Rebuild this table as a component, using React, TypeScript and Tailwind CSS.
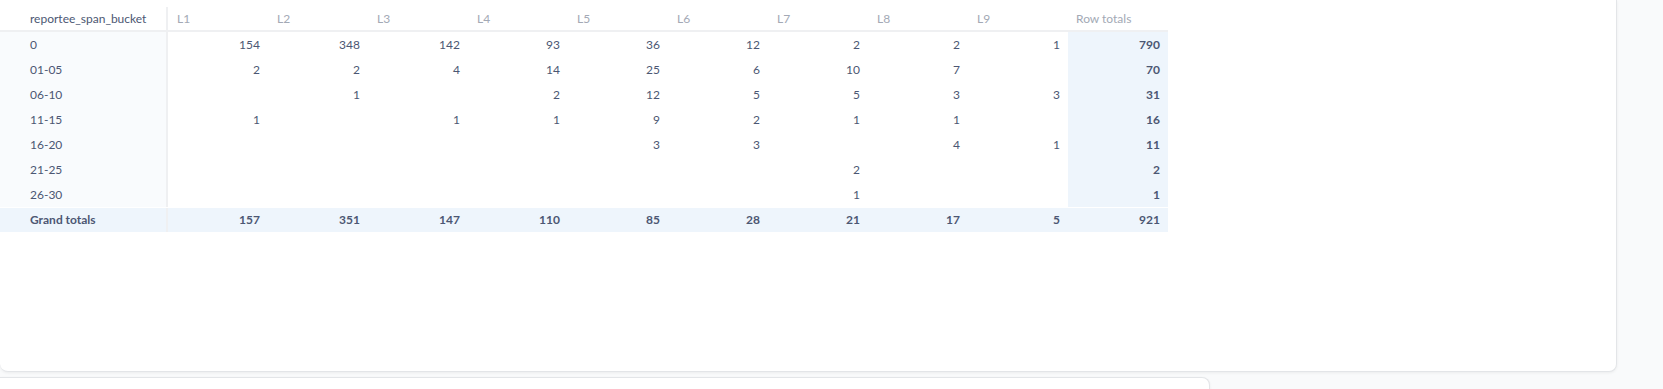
import React from "react";

const cols = ["L1", "L2", "L3", "L4", "L5", "L6", "L7", "L8", "L9"];
const rows: { label: string; vals: (number | null)[]; total: number }[] = [
  { label: "0", vals: [154, 348, 142, 93, 36, 12, 2, 2, 1], total: 790 },
  { label: "01-05", vals: [2, 2, 4, 14, 25, 6, 10, 7, null], total: 70 },
  { label: "06-10", vals: [null, 1, null, 2, 12, 5, 5, 3, 3], total: 31 },
  { label: "11-15", vals: [1, null, 1, 1, 9, 2, 1, 1, null], total: 16 },
  { label: "16-20", vals: [null, null, null, null, 3, 3, null, 4, 1], total: 11 },
  { label: "21-25", vals: [null, null, null, null, null, null, 2, null, null], total: 2 },
  { label: "26-30", vals: [null, null, null, null, null, null, 1, null, null], total: 1 },
];
const grand = [157, 351, 147, 110, 85, 28, 21, 17, 5];

export default function App() {
  return (
    <div
      className="w-[1663px] h-[389px] overflow-hidden bg-[#f9fafb]"
      style={{ fontFamily: "Lato, 'Open Sans', sans-serif" }}
    >
      <div className="w-[1617px] h-[372px] bg-white rounded-b-lg border-r border-b border-[#e3e5e8] shadow-[0_1px_3px_rgba(0,0,0,0.06)] pt-[7px]">
        <div className="w-[1168px] text-[12px] leading-none">
          {/* header */}
          <div className="flex h-[25px] border-b-2 border-[#eff0f2]">
            <div className="w-[168px] shrink-0 border-r-2 border-[#eff0f2] pl-[30px] flex items-center text-[#4c5773]">
              reportee_span_bucket
            </div>
            {cols.map((c) => (
              <div key={c} className="w-[100px] shrink-0 pl-[9px] flex items-center text-[#a3a9b5]">
                {c}
              </div>
            ))}
            <div className="w-[100px] shrink-0 pl-[8px] flex items-center text-[#a3a9b5]">Row totals</div>
          </div>
          {/* body */}
          {rows.map((r) => (
            <div key={r.label} className="flex h-[25px]">
              <div className="w-[168px] shrink-0 border-r-2 border-[#eff0f2] bg-[#f9fbfd] pl-[30px] flex items-center text-[#4c5773]">
                {r.label}
              </div>
              {r.vals.map((v, i) => (
                <div key={i} className="w-[100px] shrink-0 pr-[8px] flex items-center justify-end text-[#4c5773]">
                  {v ?? ""}
                </div>
              ))}
              <div className="w-[100px] shrink-0 pr-[8px] flex items-center justify-end bg-[#eef5fc] font-bold text-[#4c5773]">
                {r.total}
              </div>
            </div>
          ))}
          {/* grand totals */}
          <div className="flex h-[25px] border-t border-white bg-[#eef5fc] font-bold text-[#4c5773]">
            <div className="w-[168px] shrink-0 border-r-2 border-[#eff0f2] pl-[30px] flex items-center">
              Grand totals
            </div>
            {grand.map((v, i) => (
              <div key={i} className="w-[100px] shrink-0 pr-[8px] flex items-center justify-end">
                {v}
              </div>
            ))}
            <div className="w-[100px] shrink-0 pr-[8px] flex items-center justify-end">921</div>
          </div>
        </div>
      </div>
      <div className="mt-[5px] w-[1210px] h-[40px] bg-white rounded-tr-lg border-t border-r border-[#e3e5e8] shadow-[0_1px_3px_rgba(0,0,0,0.06)]" />
    </div>
  );
}
